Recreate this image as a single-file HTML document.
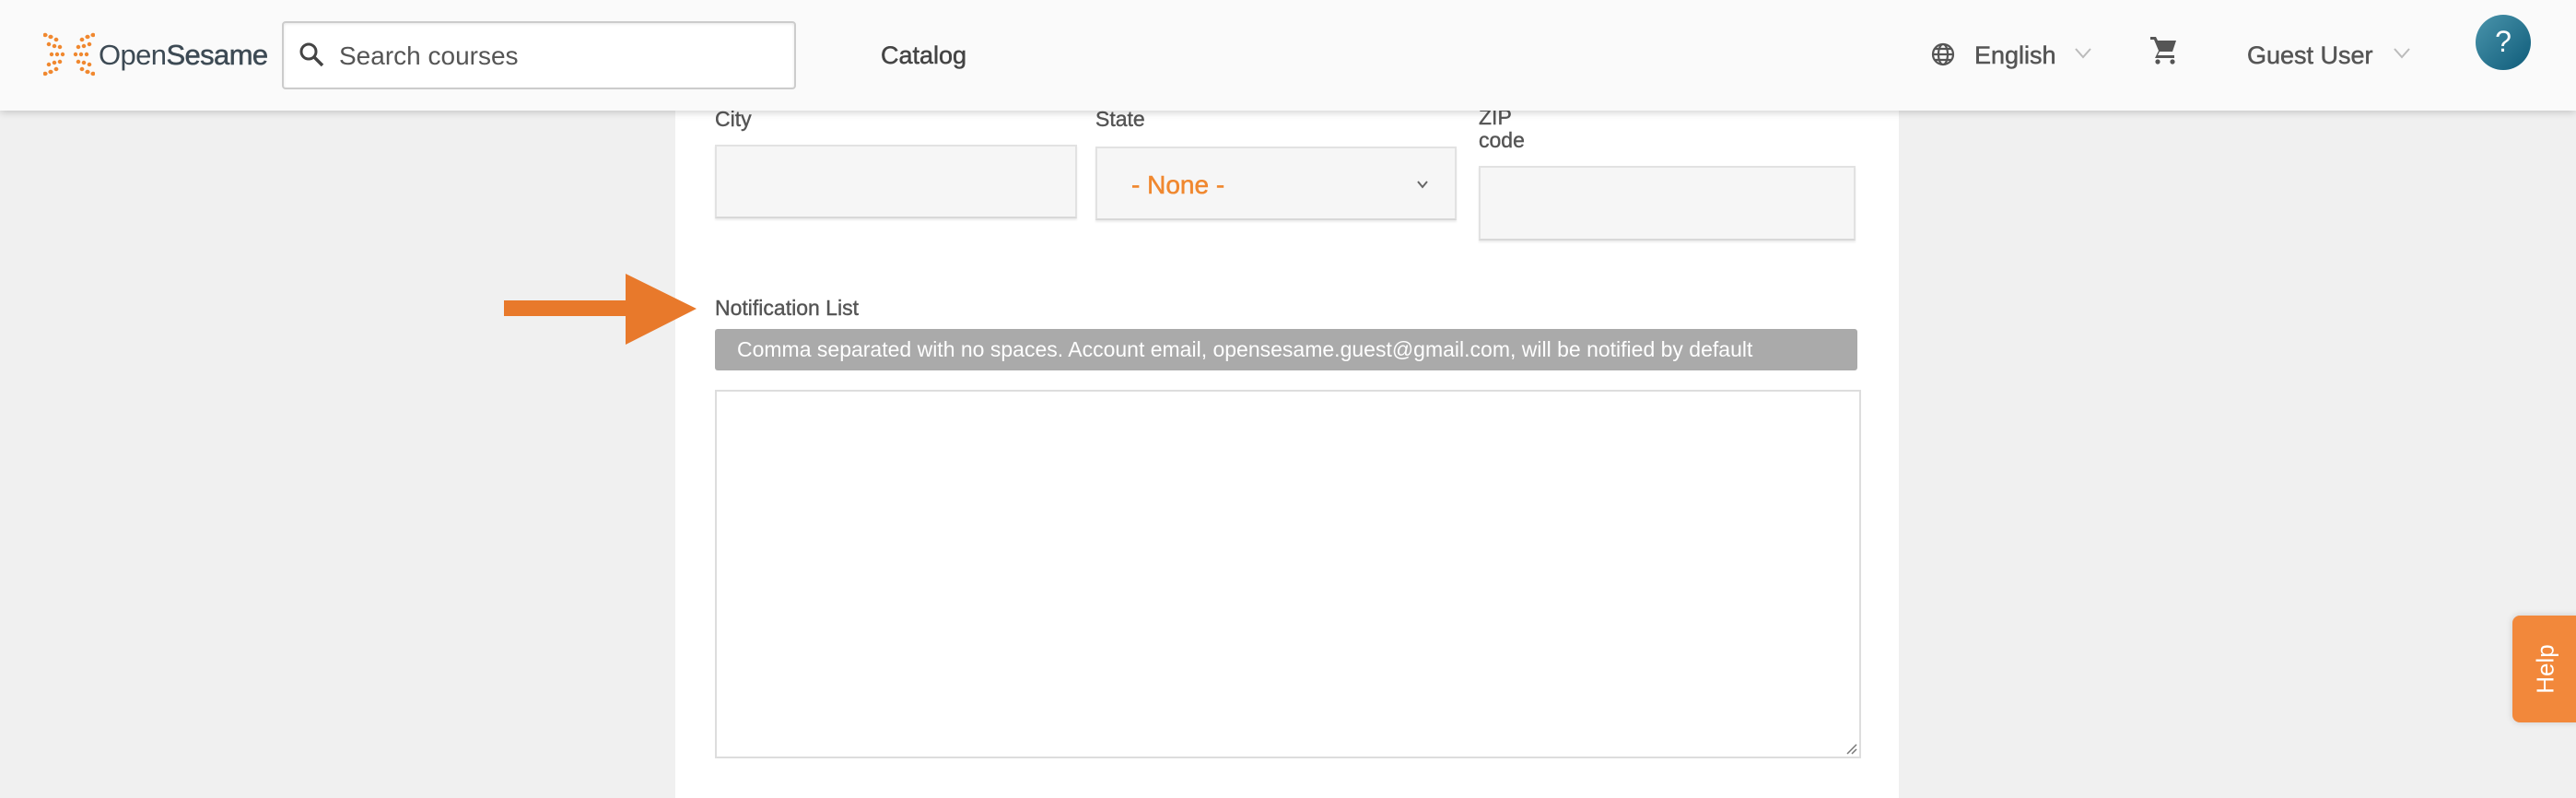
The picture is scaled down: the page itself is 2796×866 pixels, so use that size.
<!DOCTYPE html>
<html><head><meta charset="utf-8"><style>
*{box-sizing:border-box;margin:0;padding:0}
body{width:2796px;height:866px;background:#f0f0f0;font-family:"Liberation Sans",sans-serif;position:relative;overflow:hidden}
.hdr{position:absolute;left:0;top:0;width:2796px;height:120px;background:#fafafa;box-shadow:0 2px 8px rgba(0,0,0,.18);z-index:2}
.abs{position:absolute}
.panel{position:absolute;left:733px;top:0;width:1328px;height:866px;background:#fff}
.lbl{position:absolute;font-size:23px;color:#555;line-height:26px;-webkit-text-stroke:0.4px #555}
.inp{position:absolute;background:#f6f6f6;border:2px solid #e2e2e2;border-bottom-color:#d8d8d8;box-shadow:0 2px 2px rgba(0,0,0,.08)}
.med{-webkit-text-stroke:0.5px currentColor}
</style></head><body>
<div class="panel"></div>
<div class="hdr">
 <svg class="abs" style="left:47px;top:35px" width="56" height="48" viewBox="0 0 56 48">
  <g fill="#f0882f">
   <ellipse cx="2" cy="3" rx="2.6" ry="2.2"/><ellipse cx="8" cy="5" rx="2.6" ry="2.2"/><ellipse cx="14" cy="8" rx="2.4" ry="2.2"/>
   <ellipse cx="6" cy="13" rx="2.3" ry="2.2"/><ellipse cx="12" cy="15" rx="2.3" ry="2.2"/><ellipse cx="18" cy="16" rx="2.3" ry="2.2"/>
   <ellipse cx="9" cy="24" rx="2.2" ry="2.2"/><ellipse cx="15" cy="24" rx="2.2" ry="2.2"/><ellipse cx="21" cy="24" rx="2.2" ry="2.2"/>
   <ellipse cx="6" cy="35" rx="2.3" ry="2.2"/><ellipse cx="12" cy="33" rx="2.3" ry="2.2"/><ellipse cx="18" cy="32" rx="2.3" ry="2.2"/>
   <ellipse cx="2" cy="45" rx="2.6" ry="2.2"/><ellipse cx="8" cy="43" rx="2.6" ry="2.2"/><ellipse cx="14" cy="40" rx="2.4" ry="2.2"/>
   <ellipse cx="54" cy="3" rx="2.6" ry="2.2"/><ellipse cx="48" cy="5" rx="2.6" ry="2.2"/><ellipse cx="42" cy="8" rx="2.4" ry="2.2"/>
   <ellipse cx="50" cy="13" rx="2.3" ry="2.2"/><ellipse cx="44" cy="15" rx="2.3" ry="2.2"/><ellipse cx="38" cy="16" rx="2.3" ry="2.2"/>
   <ellipse cx="47" cy="24" rx="2.2" ry="2.2"/><ellipse cx="41" cy="24" rx="2.2" ry="2.2"/><ellipse cx="35" cy="24" rx="2.2" ry="2.2"/>
   <ellipse cx="50" cy="35" rx="2.3" ry="2.2"/><ellipse cx="44" cy="33" rx="2.3" ry="2.2"/><ellipse cx="38" cy="32" rx="2.3" ry="2.2"/>
   <ellipse cx="54" cy="45" rx="2.6" ry="2.2"/><ellipse cx="48" cy="43" rx="2.6" ry="2.2"/><ellipse cx="42" cy="40" rx="2.4" ry="2.2"/>
  </g>
 </svg>
 <div class="abs" style="left:107px;top:42px;font-size:31px;color:#3d4a54;letter-spacing:-0.6px">Open<span class="med">Sesame</span></div>
 <div class="abs" style="left:306px;top:23px;width:558px;height:74px;background:#fff;border:2px solid #ccc;border-radius:4px;box-shadow:inset 0 1px 3px rgba(0,0,0,.1)">
  <svg class="abs" style="left:16px;top:20px" width="30" height="30" viewBox="0 0 30 30"><circle cx="11" cy="11" r="8" fill="none" stroke="#444" stroke-width="3"/><path d="M17 17l9 9" stroke="#444" stroke-width="3.5"/></svg>
  <div class="abs" style="left:60px;top:20px;font-size:28px;color:#555">Search courses</div>
 </div>
 <div class="abs med" style="left:956px;top:45px;font-size:27px;color:#444">Catalog</div>
 <svg class="abs" style="left:2096px;top:46px" width="26" height="26" viewBox="0 0 26 26"><g fill="none" stroke="#555" stroke-width="2.2"><circle cx="13" cy="13" r="11"/><ellipse cx="13" cy="13" rx="5" ry="11"/><path d="M2 13h22M4 7h18M4 19h18"/></g></svg>
 <div class="abs med" style="left:2143px;top:45px;font-size:27px;color:#555">English</div>
 <svg class="abs" style="left:2252px;top:52px" width="18" height="12" viewBox="0 0 18 12"><path d="M1 1l8 9 8-9" fill="none" stroke="#bbb" stroke-width="2"/></svg>
 <svg class="abs" style="left:2334px;top:38px" width="30" height="32" viewBox="0 0 30 32"><path d="M0 2h6l2 4h20l-4 12H10l-2 4h18v3H5l4-8L4 5H0z" fill="#555"/><circle cx="8" cy="29" r="2.6" fill="#555"/><circle cx="24" cy="29" r="2.6" fill="#555"/></svg>
 <div class="abs med" style="left:2439px;top:45px;font-size:27px;color:#555">Guest User</div>
 <svg class="abs" style="left:2598px;top:52px" width="18" height="12" viewBox="0 0 18 12"><path d="M1 1l8 9 8-9" fill="none" stroke="#bbb" stroke-width="2"/></svg>
 <div class="abs" style="left:2687px;top:16px;width:60px;height:60px;border-radius:50%;background:linear-gradient(135deg,#4a94ab,#0f5c7a);color:#fff;font-size:32px;text-align:center;line-height:58px">?</div>
</div>
<div class="lbl" style="left:776px;top:116px">City</div>
<div class="lbl" style="left:1189px;top:116px">State</div>
<div class="lbl" style="left:1605px;top:115px;line-height:25px">ZIP<br>code</div>
<div class="inp" style="left:776px;top:157px;width:393px;height:80px"></div>
<div class="inp" style="left:1189px;top:159px;width:392px;height:80px">
 <div class="abs med" style="left:37px;top:24px;font-size:28px;color:#f0882f">- None -</div>
 <svg class="abs" style="left:346px;top:34px" width="14" height="10" viewBox="0 0 14 10"><path d="M2 2l5 6 5-6" fill="none" stroke="#666" stroke-width="2"/></svg>
</div>
<div class="inp" style="left:1605px;top:180px;width:409px;height:81px"></div>
<div class="lbl" style="left:776px;top:321px">Notification List</div>
<div class="abs" style="left:776px;top:357px;width:1240px;height:45px;background:#aaa;border-radius:3px;color:#fff;font-size:23px;line-height:45px;padding-left:24px">Comma separated with no spaces. Account email, opensesame.guest@gmail.com, will be notified by default</div>
<div class="abs" style="left:776px;top:423px;width:1244px;height:400px;background:#fff;border:2px solid #ddd">
 <svg class="abs" style="right:2px;bottom:2px" width="14" height="14" viewBox="0 0 14 14"><path d="M13 3L3 13M13 8l-5 5" stroke="#777" stroke-width="1.5"/></svg>
</div>
<svg class="abs" style="left:547px;top:297px" width="212" height="78" viewBox="0 0 212 78"><path d="M0 29h132V0l77 38-77 39V46H0z" fill="#e8792b"/></svg>
<div class="abs" style="left:2727px;top:668px;width:72px;height:116px;background:#f2883b;border-radius:8px 0 0 8px;box-shadow:0 0 8px rgba(0,0,0,.15)">
 <div class="abs" style="left:36px;top:58px;transform:translate(-50%,-50%) rotate(-90deg);color:#fff;font-size:26px">Help</div>
</div>
</body></html>
